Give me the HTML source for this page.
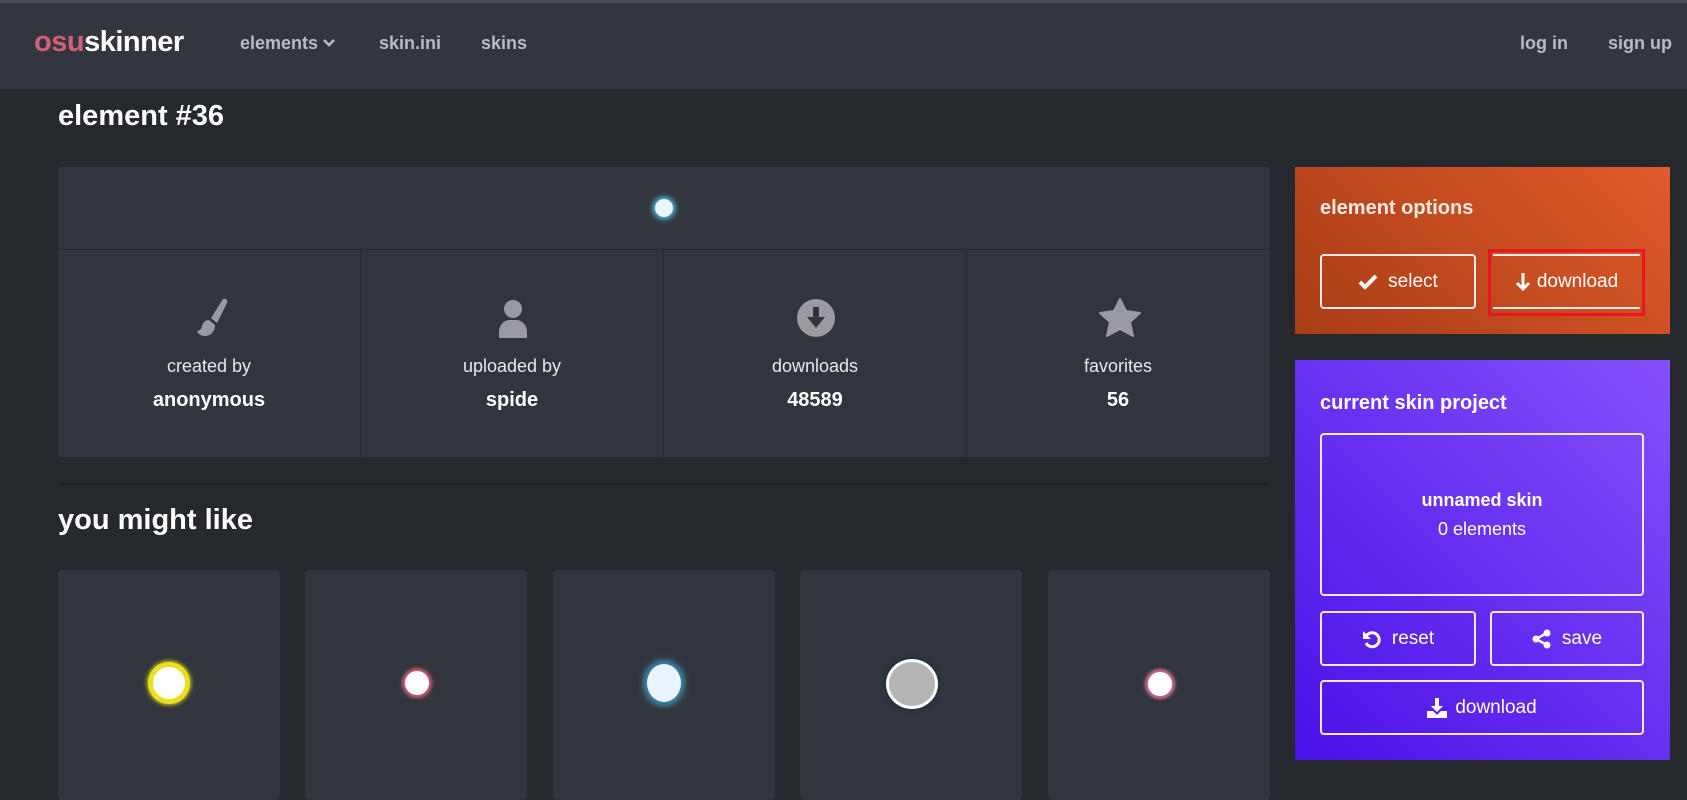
<!DOCTYPE html>
<html><head><meta charset="utf-8"><style>
*{box-sizing:border-box;margin:0;padding:0}
body{width:1687px;height:795px;overflow:hidden;background:#25282d;font-family:"Liberation Sans",sans-serif;color:#fff;position:relative}
.nav{position:absolute;left:0;top:0;width:1687px;height:89px;background:#33363e;border-top:3px solid #4a4d54}
.abs{position:absolute}
.logo{left:34px;top:26px;font-size:29px;font-weight:bold;letter-spacing:-0.5px}
.nl{font-size:18px;font-weight:bold;color:#b9bbc0;top:33px}
.card{background:#32353d}
.stat{position:absolute;top:250px;height:207px;width:303px;text-align:center;border-right:1px solid #25282d}
.stat svg{position:absolute;left:132px;top:48px}
.stat .l{position:absolute;top:106px;width:100%;font-size:18px;color:#e8e8ea}
.stat .v{position:absolute;top:139px;width:100%;font-size:20px;font-weight:bold}
.btn{position:absolute;border:2px solid #f3e8ee;border-radius:4px;display:flex;align-items:center;justify-content:center;font-size:19px;color:#fff;gap:10px}
.rc{position:absolute;top:570px;width:222px;height:230px;background:#32353d;border-radius:4px}
.dot{position:absolute;border-radius:50%}
</style></head><body>
<div class="nav">
<div class="abs logo" style="top:23px"><span style="color:#d0607a">osu</span>skinner</div>
<div class="abs nl" style="left:240px;top:30px">elements <svg width="12" height="10" viewBox="0 0 12 10" style="vertical-align:1px"><path d="M1 2l5 5 5-5" stroke="#b9bbc0" stroke-width="2.6" fill="none"/></svg></div>
<div class="abs nl" style="left:379px;top:30px">skin.ini</div>
<div class="abs nl" style="left:481px;top:30px">skins</div>
<div class="abs nl" style="left:1520px;top:30px">log in</div>
<div class="abs nl" style="left:1608px;top:30px">sign up</div>
</div>
<div class="abs" style="left:58px;top:100px;font-size:29px;font-weight:bold">element #36</div>

<div class="abs card" style="left:58px;top:167px;width:1212px;height:290px;border-radius:4px"></div>
<div class="abs" style="left:58px;top:249px;width:1212px;height:1px;background:#25282d"></div>
<div class="dot" style="left:655px;top:199px;width:18px;height:18px;background:#eaf6ff;box-shadow:0 0 4px 3px #4aa3c8"></div>

<div class="stat" style="left:58px">
<svg width="40" height="40" viewBox="0 0 40 40"><path d="M33 1c3-1 5 1 4 4L27 25l-6-5z" fill="#9a9ba0"/><path d="M19 22l6 5c0 6-4 11-10 11-4 0-7-2-8-5 3 0 4-2 5-5 1-4 4-6 7-6z" fill="#9a9ba0"/></svg>
<div class="l">created by</div><div class="v">anonymous</div></div>
<div class="stat" style="left:361px">
<svg width="40" height="40" viewBox="0 0 40 40"><circle cx="20" cy="11" r="9" fill="#9a9ba0"/><path d="M6 40v-6c0-7 5-12 11-12h6c6 0 11 5 11 12v6z" fill="#9a9ba0"/></svg>
<div class="l">uploaded by</div><div class="v">spide</div></div>
<div class="stat" style="left:664px">
<svg width="40" height="40" viewBox="0 0 40 40"><circle cx="20" cy="20" r="19" fill="#9a9ba0"/><path d="M17 9h6v10h6l-9 11-9-11h6z" fill="#32353d"/></svg>
<div class="l">downloads</div><div class="v">48589</div></div>
<div class="stat" style="left:966px;width:304px;border-right:none">
<svg width="44" height="40" viewBox="0 0 44 40"><path d="M22 1l6 12 14 2-10 9 3 14-13-7-13 7 3-14L2 15l14-2z" fill="#9a9ba0" stroke="#9a9ba0" stroke-linejoin="round" stroke-width="2"/></svg>
<div class="l">favorites</div><div class="v">56</div></div>

<div class="abs" style="left:58px;top:483px;width:1212px;height:2px;background:#1e2024"></div>
<div class="abs" style="left:58px;top:504px;font-size:29px;font-weight:bold">you might like</div>

<div class="rc" style="left:58px"><div class="dot" style="left:90px;top:92px;width:42px;height:42px;background:#fff;border:5px solid #e8e020;box-shadow:0 0 4px 1px #d8d020"></div></div>
<div class="rc" style="left:305px"><div class="dot" style="left:100px;top:101px;width:24px;height:24px;background:#fff;box-shadow:0 0 3px 3px #c86070"></div></div>
<div class="rc" style="left:553px"><div class="dot" style="left:94px;top:94px;width:34px;height:38px;background:#e8f4ff;box-shadow:0 0 6px 4px #3a8aaa"></div></div>
<div class="rc" style="left:800px"><div class="dot" style="left:86px;top:89px;width:52px;height:50px;background:#b5b5b5;border:3px solid #fff;box-shadow:0 0 3px 2px #26304a"></div></div>
<div class="rc" style="left:1048px"><div class="dot" style="left:100px;top:102px;width:24px;height:24px;background:#fff;box-shadow:0 0 3px 3px #d07090"></div></div>

<div class="abs" style="left:1295px;top:167px;width:375px;height:167px;background:linear-gradient(225deg,#e05a2c,#a83d14)"></div>
<div class="abs" style="left:1320px;top:197px;font-size:20px;font-weight:bold;color:#f8ebe4">element options</div>
<div class="btn" style="left:1320px;top:254px;width:156px;height:55px"><svg width="20" height="16" viewBox="0 0 20 16"><path d="M2 8l5 5L18 2" stroke="#fff" stroke-width="4" fill="none"/></svg>select</div>
<div class="abs" style="left:1488px;top:249px;width:157px;height:67px;border:3px solid #e8161e"></div>
<div class="btn" style="left:1493px;top:254px;width:147px;height:55px;border-left:none;border-right:none;border-radius:0;gap:6px"><svg width="16" height="20" viewBox="0 0 16 20"><path d="M8 1v16M2 11l6 6 6-6" stroke="#fff" stroke-width="3" fill="none"/></svg>download</div>

<div class="abs" style="left:1295px;top:360px;width:375px;height:400px;background:linear-gradient(225deg,#8550fa,#4a10e8)"></div>
<div class="abs" style="left:1320px;top:392px;font-size:20px;font-weight:bold">current skin project</div>
<div class="btn" style="left:1320px;top:433px;width:324px;height:163px;flex-direction:column;gap:8px"><b style="font-size:18px">unnamed skin</b><span style="font-size:18px">0 elements</span></div>
<div class="btn" style="left:1320px;top:611px;width:156px;height:55px"><svg width="20" height="20" viewBox="0 0 20 20"><path d="M5 6a7 7 0 1 1 -1 8" stroke="#fff" stroke-width="3" fill="none"/><path d="M1 2v8h8z" fill="#fff"/></svg>reset</div>
<div class="btn" style="left:1490px;top:611px;width:154px;height:55px"><svg width="20" height="20" viewBox="0 0 20 20"><circle cx="15" cy="4" r="3.5" fill="#fff"/><circle cx="4" cy="10" r="3.5" fill="#fff"/><circle cx="15" cy="16" r="3.5" fill="#fff"/><path d="M15 4L4 10l11 6" stroke="#fff" stroke-width="2.5" fill="none"/></svg>save</div>
<div class="btn" style="left:1320px;top:680px;width:324px;height:55px;gap:8px"><svg width="20" height="20" viewBox="0 0 20 20"><path d="M8 0h4v8h4l-6 6-6-6h4z" fill="#fff"/><path d="M0 13h6l4 4 4-4h6v7H0z" fill="#fff"/></svg>download</div>
</body></html>
